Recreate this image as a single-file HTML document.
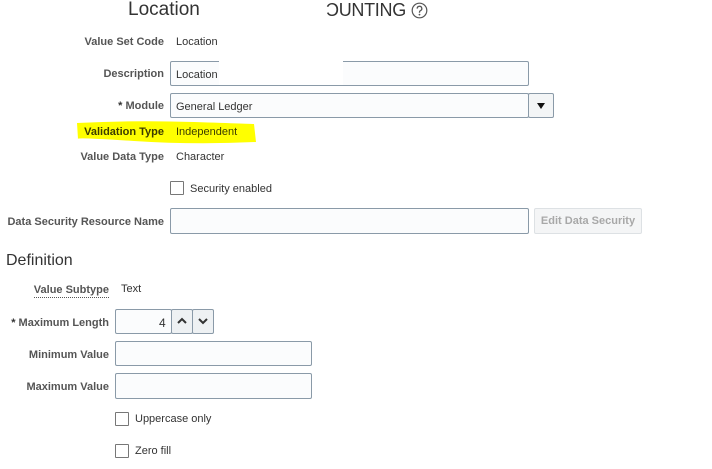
<!DOCTYPE html>
<html><head><style>
body{margin:0;width:712px;height:469px;background:#fff;position:relative;overflow:hidden;font-family:"Liberation Sans",sans-serif;font-size:11.5px;color:#333}
.a{position:absolute;white-space:nowrap}
.l{position:absolute;white-space:nowrap;text-align:right;font-weight:bold;color:#555;font-size:11px}
.in{position:absolute;border:1px solid #8a9aa8;background:#fbfcfd;box-sizing:border-box;border-radius:2px}
.cb{position:absolute;width:14px;height:14px;border:1px solid #777;box-sizing:border-box;background:#fff;border-radius:1px}
</style></head><body>
<div class="a" style="left:128px;top:-1px;font-size:19px;color:#333">Location</div>
<div class="a" style="left:326px;top:0px;font-size:18px;color:#333;letter-spacing:-0.3px">ƆUNTING</div>
<svg class="a" style="left:411px;top:2px" width="17" height="17" viewBox="0 0 17 17"><circle cx="8.5" cy="8.5" r="7.3" fill="none" stroke="#555" stroke-width="1.2"/><path d="M6.2 6.6a2.3 2.3 0 1 1 3.2 2.1c-.6.3-.9.7-.9 1.4v.6" fill="none" stroke="#555" stroke-width="1.3"/><circle cx="8.5" cy="12.6" r=".9" fill="#555"/></svg>

<div class="l" style="right:548px;top:36px">Value Set Code</div>
<div class="a" style="left:176px;top:36px;font-size:11px">Location</div>

<div class="l" style="right:548px;top:68px">Description</div>
<div class="in" style="left:170px;top:61px;width:359px;height:25px"></div>
<div class="a" style="left:219px;top:30px;width:124px;height:55px;background:#fff"></div>
<div class="a" style="left:176px;top:69px;font-size:11px">Location</div>

<div class="l" style="right:548px;top:100px"><span style="color:#333">*</span> Module</div>
<div class="in" style="left:170px;top:93px;width:359px;height:25px"></div>
<div class="a" style="left:176px;top:101px;font-size:11px">General Ledger</div>
<div class="in" style="left:528px;top:93px;width:26px;height:25px;background:#f3f5f6;border-color:#8a9aa8"></div>
<div class="a" style="left:537px;top:103px;width:0;height:0;border-left:4px solid transparent;border-right:4px solid transparent;border-top:6px solid #111"></div>

<svg class="a" style="left:74px;top:118px" width="186" height="28"><path d="M3 5 Q60 2 120 4 T180 6 L182 24 Q120 27 60 23 T4 21 Z" fill="#ffff00"/></svg>
<div class="l" style="right:548px;top:126px;color:#3c3c00">Validation Type</div>
<div class="a" style="left:176px;top:126px;font-size:11px;color:#3c3c00">Independent</div>

<div class="l" style="right:548px;top:151px">Value Data Type</div>
<div class="a" style="left:176px;top:151px;font-size:11px">Character</div>

<div class="cb" style="left:170px;top:181px"></div>
<div class="a" style="left:190px;top:183px;font-size:11px">Security enabled</div>

<div class="l" style="right:548px;top:216px">Data Security Resource Name</div>
<div class="in" style="left:170px;top:208px;width:359px;height:26px"></div>
<div class="a" style="left:534px;top:208px;width:108px;height:26px;box-sizing:border-box;border:1px solid #dde1e4;background:#f4f5f6;border-radius:2px;color:#a8a8a8;font-weight:bold;font-size:11px;text-align:center;line-height:24px">Edit Data Security</div>

<div class="a" style="left:6px;top:252px;font-size:16px;color:#333">Definition</div>

<div class="l" style="right:603px;top:284px;border-bottom:1px dotted #555;padding-bottom:1px">Value Subtype</div>
<div class="a" style="left:121px;top:283px;font-size:11px">Text</div>

<div class="l" style="right:603px;top:317px"><span style="color:#333">*</span> Maximum Length</div>
<div class="in" style="left:115px;top:309px;width:57px;height:25px"></div>
<div class="a" style="left:159px;top:316px;font-size:12px;color:#333">4</div>
<div class="in" style="left:171px;top:309px;width:22px;height:25px;background:#eef1f3"></div>
<div class="in" style="left:192px;top:309px;width:22px;height:25px;background:#eef1f3"></div>
<svg class="a" style="left:176px;top:316px" width="12" height="10"><path d="M2 7 L6 3 L10 7" fill="none" stroke="#333" stroke-width="2"/></svg>
<svg class="a" style="left:197px;top:316px" width="12" height="10"><path d="M2 3 L6 7 L10 3" fill="none" stroke="#333" stroke-width="2"/></svg>

<div class="l" style="right:603px;top:349px">Minimum Value</div>
<div class="in" style="left:115px;top:341px;width:197px;height:25px"></div>

<div class="l" style="right:603px;top:381px">Maximum Value</div>
<div class="in" style="left:115px;top:373px;width:197px;height:26px"></div>

<div class="cb" style="left:115px;top:412px"></div>
<div class="a" style="left:135px;top:413px;font-size:11px">Uppercase only</div>
<div class="cb" style="left:115px;top:444px"></div>
<div class="a" style="left:135px;top:445px;font-size:11px">Zero fill</div>
</body></html>
